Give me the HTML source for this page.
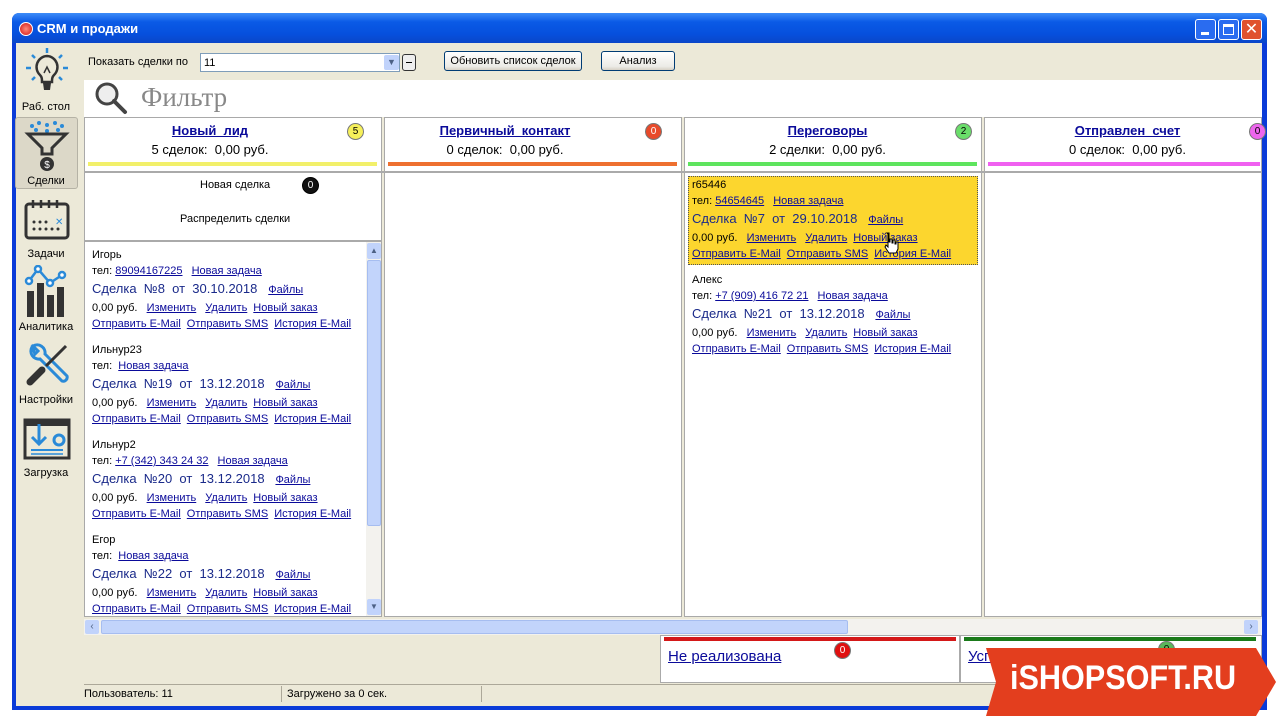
<!DOCTYPE html>
<html><head><meta charset="utf-8"><style>
*{margin:0;padding:0;box-sizing:border-box}
body{width:1280px;height:720px;background:#fff;position:relative;overflow:hidden;font-family:"Liberation Sans","DejaVu Sans",sans-serif;font-size:11px;color:#000}
.a{position:absolute}
a,.l{color:#0a0a9a;text-decoration:underline}
.win{left:12px;top:13px;width:1255px;height:697px;background:#0a3bd8;border-radius:7px 7px 0 0}
.tb{left:12px;top:13px;width:1255px;height:30px;border-radius:7px 7px 0 0;background:linear-gradient(#3d8cf8,#0a5ae6 30%,#0650dd 70%,#0a46c8)}
.cont{left:16px;top:43px;width:1246px;height:663px;background:#ece9d8}
.btn{background:linear-gradient(#fff,#ecebe6 80%,#d6d0c5);border:1px solid #003c74;border-radius:3px;text-align:center;line-height:18px}
.col{background:#fff;border:1px solid #a9a9a9}
.hd{text-align:center}
.hd .t{font-size:13px;font-weight:bold;color:#0a0a9a;text-decoration:underline;display:block;margin-top:5px}
.hd .s{font-size:13px;display:block;margin-top:4px}
.badge{width:17px;height:17px;border-radius:50%;font-size:10px;text-align:center;line-height:16px;border:1px solid #777}
.deal div{height:16px;line-height:16px;white-space:nowrap}
.deal .big{font-size:13px;height:21px;color:#1a2a8a;line-height:19px}
.deal a{margin-right:6px}
.side{text-align:center;width:64px;font-size:11px}
</style></head><body>
<div class="a win"></div>
<div class="a tb"></div>
<div class="a" style="left:19px;top:22px;width:14px;height:14px;border-radius:50%;background:radial-gradient(#ff8a7a,#d01010);border:1px solid #fff"></div>
<div class="a" style="left:37px;top:21px;color:#fff;font-weight:bold;font-size:13px">CRM и продажи</div>
<div class="a" style="left:1195px;top:19px;width:21px;height:21px;border:1px solid #fff;border-radius:3px;background:#2a6cf0"><div class="a" style="left:5px;top:12px;width:8px;height:3px;background:#fff"></div></div>
<div class="a" style="left:1218px;top:19px;width:21px;height:21px;border:1px solid #fff;border-radius:3px;background:#2a6cf0"><div class="a" style="left:4px;top:4px;width:11px;height:11px;border:1px solid #fff;border-top-width:3px"></div></div>
<div class="a" style="left:1241px;top:19px;width:21px;height:21px;border:1px solid #fff;border-radius:3px;background:#e0522e;color:#fff;font-size:16px;text-align:center;line-height:19px">✕</div>
<div class="a cont"></div>

<!-- sidebar -->
<div class="a" style="left:15px;top:117px;width:63px;height:72px;border:1px solid #b5b2a5;border-radius:3px;background:#dcd8c8"></div>
<svg class="a" style="left:24px;top:46px" width="46" height="54" viewBox="0 0 46 54"><g stroke="#2a8ad8" stroke-width="2.5"><line x1="23" y1="2" x2="23" y2="7"/><line x1="8" y1="9" x2="11" y2="12"/><line x1="38" y1="9" x2="35" y2="12"/><line x1="2" y1="22" x2="7" y2="22"/><line x1="39" y1="22" x2="44" y2="22"/><line x1="8" y1="34" x2="11" y2="31"/><line x1="38" y1="34" x2="35" y2="31"/></g><path d="M23 10a11 11 0 0 0-7 19c2 2 2 4 2 7h10c0-3 0-5 2-7a11 11 0 0 0-7-19z" fill="none" stroke="#333" stroke-width="2.5"/><path d="M19 37h8l-1 7h-6z" fill="#333"/><path d="M20 27l3-6 3 6" fill="none" stroke="#333" stroke-width="1.5"/></svg>
<div class="a side" style="left:14px;top:101px">Раб. стол</div>
<svg class="a" style="left:24px;top:120px" width="46" height="54" viewBox="0 0 46 54"><g fill="#2a8ad8"><circle cx="8" cy="6" r="2"/><circle cx="15" cy="3" r="2"/><circle cx="23" cy="5" r="2"/><circle cx="31" cy="3" r="2"/><circle cx="38" cy="6" r="2"/><circle cx="12" cy="10" r="2"/><circle cx="34" cy="10" r="2"/><circle cx="23" cy="11" r="2"/></g><path d="M4 14h38l-14 14v6h-10v-6z" fill="none" stroke="#333" stroke-width="3"/><circle cx="23" cy="44" r="7" fill="#333"/><text x="23" y="48" font-size="10" fill="#fff" text-anchor="middle" font-family="Liberation Sans">$</text></svg>
<div class="a side" style="left:14px;top:175px">Сделки</div>
<svg class="a" style="left:24px;top:198px" width="46" height="42" viewBox="0 0 46 42"><rect x="2" y="6" width="42" height="34" rx="3" fill="none" stroke="#333" stroke-width="3"/><g stroke="#333" stroke-width="2.5"><line x1="9" y1="2" x2="9" y2="10"/><line x1="17" y1="2" x2="17" y2="10"/><line x1="25" y1="2" x2="25" y2="10"/><line x1="33" y1="2" x2="33" y2="10"/></g><g fill="#333"><circle cx="10" cy="24" r="1.5"/><circle cx="16" cy="24" r="1.5"/><circle cx="22" cy="24" r="1.5"/><circle cx="10" cy="31" r="1.5"/><circle cx="16" cy="31" r="1.5"/><circle cx="22" cy="31" r="1.5"/><circle cx="28" cy="31" r="1.5"/><circle cx="34" cy="31" r="1.5"/></g><text x="31" y="27" font-size="10" fill="#2a8ad8" font-family="Liberation Sans">✕</text></svg>
<div class="a side" style="left:14px;top:248px">Задачи</div>
<svg class="a" style="left:24px;top:265px" width="46" height="54" viewBox="0 0 46 54"><g fill="#333"><rect x="3" y="26" width="7" height="26"/><rect x="13" y="18" width="7" height="34"/><rect x="23" y="30" width="7" height="22"/><rect x="33" y="22" width="7" height="30"/></g><polyline points="5,16 14,4 26,18 38,10" fill="none" stroke="#2a8ad8" stroke-width="2.5"/><g fill="#fff" stroke="#2a8ad8" stroke-width="2.5"><circle cx="5" cy="16" r="3"/><circle cx="14" cy="4" r="3"/><circle cx="26" cy="18" r="3"/><circle cx="38" cy="10" r="3"/></g></svg>
<div class="a side" style="left:14px;top:321px">Аналитика</div>
<svg class="a" style="left:24px;top:343px" width="46" height="46" viewBox="0 0 46 46"><path d="M8 4a8 8 0 0 0 8 12l22 22a4 4 0 0 0 5-5l-22-22a8 8 0 0 0-12-8l5 5-3 3z" fill="none" stroke="#2a8ad8" stroke-width="3"/><line x1="42" y1="3" x2="22" y2="23" stroke="#333" stroke-width="3"/><line x1="18" y1="27" x2="6" y2="39" stroke="#333" stroke-width="7" stroke-linecap="round"/></svg>
<div class="a side" style="left:14px;top:394px">Настройки</div>
<svg class="a" style="left:23px;top:416px" width="48" height="46" viewBox="0 0 48 46"><rect x="2" y="4" width="44" height="38" fill="none" stroke="#333" stroke-width="3"/><rect x="2" y="4" width="44" height="6" fill="#333"/><path d="M16 8v20m-7-7l7 7 7-7" fill="none" stroke="#2a8ad8" stroke-width="3"/><circle cx="36" cy="24" r="5" fill="none" stroke="#2a8ad8" stroke-width="3"/><line x1="8" y1="34" x2="40" y2="34" stroke="#2a8ad8" stroke-width="2"/><line x1="8" y1="38" x2="40" y2="38" stroke="#2a8ad8" stroke-width="1.5"/></svg>
<div class="a side" style="left:14px;top:467px">Загрузка</div>

<!-- toolbar -->
<div class="a" style="left:88px;top:56px">Показать сделки по</div>
<div class="a" style="left:200px;top:53px;width:200px;height:19px;border:1px solid #7f9db9;background:#fff;padding:3px 3px">11</div>
<div class="a" style="left:384px;top:55px;width:15px;height:15px;background:#c1d3fb;border-radius:2px;color:#4d6185;font-size:9px;text-align:center;line-height:15px">▼</div>
<div class="a" style="left:402px;top:54px;width:14px;height:17px;border:1px solid #333;border-radius:3px;background:#eee"><div class="a" style="left:3px;top:7px;width:6px;height:1px;background:#000"></div></div>
<div class="a btn" style="left:444px;top:51px;width:138px;height:20px">Обновить список сделок</div>
<div class="a btn" style="left:601px;top:51px;width:74px;height:20px">Анализ</div>

<!-- filter -->
<div class="a" style="left:84px;top:80px;width:1178px;height:37px;background:#fff"></div>
<svg class="a" style="left:94px;top:81px" width="34" height="34" viewBox="0 0 34 34"><circle cx="13" cy="13" r="10" fill="#eee" stroke="#444" stroke-width="3"/><line x1="20" y1="20" x2="31" y2="31" stroke="#444" stroke-width="4" stroke-linecap="round"/></svg>
<div class="a" style="left:141px;top:82px;font-family:'Liberation Serif',serif;font-size:27px;color:#888">Фильтр</div>

<!-- columns -->
<div class="a col" style="left:84px;top:117px;width:298px;height:500px"></div>
<div class="a col" style="left:384px;top:117px;width:298px;height:500px"></div>
<div class="a col" style="left:684px;top:117px;width:298px;height:500px"></div>
<div class="a col" style="left:984px;top:117px;width:278px;height:500px"></div>
<div class="a" style="left:85px;top:171px;width:1177px;height:2px;background:#aaa"></div>

<div class="a hd" style="left:85px;top:118px;width:250px"><span class="t">Новый&nbsp;&nbsp;лид</span><span class="s">5 сделок:&nbsp; 0,00 руб.</span></div>
<div class="a badge" style="left:347px;top:123px;background:#f6f05a">5</div>
<div class="a" style="left:88px;top:162px;width:289px;height:4px;background:#f2f06a"></div>

<div class="a hd" style="left:385px;top:118px;width:240px"><span class="t">Первичный&nbsp;&nbsp;контакт</span><span class="s">0 сделок:&nbsp; 0,00 руб.</span></div>
<div class="a badge" style="left:645px;top:123px;background:#e84a2a;color:#fff">0</div>
<div class="a" style="left:388px;top:162px;width:289px;height:4px;background:#ee7030"></div>

<div class="a hd" style="left:685px;top:118px;width:285px"><span class="t">Переговоры</span><span class="s">2 сделки:&nbsp; 0,00 руб.</span></div>
<div class="a badge" style="left:955px;top:123px;background:#6ade6a">2</div>
<div class="a" style="left:688px;top:162px;width:289px;height:4px;background:#5ee45e"></div>

<div class="a hd" style="left:985px;top:118px;width:285px"><span class="t">Отправлен&nbsp;&nbsp;счет</span><span class="s">0 сделок:&nbsp; 0,00 руб.</span></div>
<div class="a badge" style="left:1249px;top:123px;background:#ee66ee">0</div>
<div class="a" style="left:988px;top:162px;width:272px;height:4px;background:#f060f0"></div>

<div class="a" style="left:200px;top:179px;font-size:11px">Новая сделка</div>
<div class="a badge" style="left:302px;top:177px;background:#111;color:#fff;border-color:#000">0</div>
<div class="a" style="left:180px;top:213px">Распределить сделки</div>
<div class="a" style="left:85px;top:240px;width:296px;height:2px;background:#aaa"></div>

<!-- scrollbar col1 -->
<div class="a" style="left:366px;top:242px;width:15px;height:374px;background:#f3f2ee"></div>
<div class="a" style="left:367px;top:243px;width:14px;height:16px;background:#c1d3fb;border-radius:2px;font-size:8px;color:#4d6185;text-align:center;line-height:16px">▲</div>
<div class="a" style="left:367px;top:260px;width:14px;height:266px;background:#c2d4fb;border:1px solid #a6bdf0;border-radius:2px"></div>
<div class="a" style="left:367px;top:599px;width:14px;height:16px;background:#c1d3fb;border-radius:2px;font-size:8px;color:#4d6185;text-align:center;line-height:16px">▼</div>

<div class="a deal" style="left:92px;top:247px">
<div>Игорь</div><div>тел: <a>89094167225</a> <a>Новая задача</a></div><div class="big">Сделка&nbsp; №8&nbsp; от&nbsp; 30.10.2018 &nbsp;&nbsp;<a style="font-size:11px">Файлы</a></div><div>0,00 руб. &nbsp; <a>Изменить</a> <a>Удалить</a><a>Новый заказ</a></div><div><a>Отправить E-Mail</a><a>Отправить SMS</a><a>История E-Mail</a></div></div>
<div class="a deal" style="left:92px;top:342px">
<div>Ильнур23</div><div>тел: &nbsp;<a>Новая задача</a></div><div class="big">Сделка&nbsp; №19&nbsp; от&nbsp; 13.12.2018 &nbsp;&nbsp;<a style="font-size:11px">Файлы</a></div><div>0,00 руб. &nbsp; <a>Изменить</a> <a>Удалить</a><a>Новый заказ</a></div><div><a>Отправить E-Mail</a><a>Отправить SMS</a><a>История E-Mail</a></div></div>
<div class="a deal" style="left:92px;top:437px">
<div>Ильнур2</div><div>тел: <a>+7 (342) 343 24 32</a> <a>Новая задача</a></div><div class="big">Сделка&nbsp; №20&nbsp; от&nbsp; 13.12.2018 &nbsp;&nbsp;<a style="font-size:11px">Файлы</a></div><div>0,00 руб. &nbsp; <a>Изменить</a> <a>Удалить</a><a>Новый заказ</a></div><div><a>Отправить E-Mail</a><a>Отправить SMS</a><a>История E-Mail</a></div></div>
<div class="a deal" style="left:92px;top:532px">
<div>Егор</div><div>тел: &nbsp;<a>Новая задача</a></div><div class="big">Сделка&nbsp; №22&nbsp; от&nbsp; 13.12.2018 &nbsp;&nbsp;<a style="font-size:11px">Файлы</a></div><div>0,00 руб. &nbsp; <a>Изменить</a> <a>Удалить</a><a>Новый заказ</a></div><div><a>Отправить E-Mail</a><a>Отправить SMS</a><a>История E-Mail</a></div></div>

<div class="a" style="left:688px;top:176px;width:290px;height:89px;background:#fcd62e;border:1px dotted #555"></div>
<div class="a deal" style="left:692px;top:177px">
<div>r65446</div><div>тел: <a>54654645</a> <a>Новая задача</a></div><div class="big">Сделка&nbsp; №7&nbsp; от&nbsp; 29.10.2018 &nbsp;&nbsp;<a style="font-size:11px">Файлы</a></div><div>0,00 руб. &nbsp; <a>Изменить</a> <a>Удалить</a><a>Новый заказ</a></div><div><a>Отправить E-Mail</a><a>Отправить SMS</a><a>История E-Mail</a></div></div>
<div class="a deal" style="left:692px;top:272px">
<div>Алекс</div><div>тел: <a>+7 (909) 416 72 21</a> <a>Новая задача</a></div><div class="big">Сделка&nbsp; №21&nbsp; от&nbsp; 13.12.2018 &nbsp;&nbsp;<a style="font-size:11px">Файлы</a></div><div>0,00 руб. &nbsp; <a>Изменить</a> <a>Удалить</a><a>Новый заказ</a></div><div><a>Отправить E-Mail</a><a>Отправить SMS</a><a>История E-Mail</a></div></div>
<svg class="a" style="left:883px;top:232px" width="16" height="22" viewBox="0 0 16 22"><path d="M4 1h2v9h1V7h2v4h1V8h2v4h1V10h2v7l-2 4H6L2 15l1-2 2 2V2z" fill="#fff" stroke="#000" stroke-width="1"/></svg>

<!-- hscroll -->
<div class="a" style="left:84px;top:619px;width:1178px;height:16px;background:#f3f2ee"></div>
<div class="a" style="left:85px;top:620px;width:14px;height:14px;background:#c1d3fb;border-radius:2px;font-size:10px;color:#4d6185;text-align:center;line-height:14px">‹</div>
<div class="a" style="left:101px;top:620px;width:747px;height:14px;background:#c2d4fb;border:1px solid #a6bdf0;border-radius:2px"></div>
<div class="a" style="left:1244px;top:620px;width:14px;height:14px;background:#c1d3fb;border-radius:2px;font-size:10px;color:#4d6185;text-align:center;line-height:14px">›</div>

<!-- bottom cards -->
<div class="a" style="left:660px;top:635px;width:300px;height:48px;background:#fff;border:1px solid #aaa"></div>
<div class="a" style="left:960px;top:635px;width:302px;height:48px;background:#fff;border:1px solid #aaa"></div>
<div class="a" style="left:664px;top:637px;width:292px;height:4px;background:#d41818"></div>
<div class="a" style="left:964px;top:637px;width:292px;height:4px;background:#1a7a1a"></div>
<div class="a l" style="left:668px;top:648px;font-size:15px">Не реализована</div>
<div class="a badge" style="left:834px;top:642px;background:#e01010;color:#fff">0</div>
<div class="a l" style="left:968px;top:648px;font-size:15px">Усп</div>
<div class="a badge" style="left:1158px;top:641px;background:#5ab85a">0</div>

<!-- status -->
<div class="a" style="left:84px;top:684px;width:1178px;height:1px;background:#aca899"></div>
<div class="a" style="left:84px;top:688px">Пользователь: 11</div>
<div class="a" style="left:281px;top:686px;width:1px;height:16px;background:#aca899"></div>
<div class="a" style="left:287px;top:688px">Загружено за 0 сек.</div>
<div class="a" style="left:481px;top:686px;width:1px;height:16px;background:#aca899"></div>

<!-- banner -->
<svg class="a" style="left:984px;top:646px" width="296" height="74" viewBox="0 0 296 74"><polygon points="18,2 272,2 292,36 272,70 18,70 2,70 12,36 2,2" fill="#e33e1e"/></svg>
<div class="a" style="left:1010px;top:659px;font-size:34px;font-weight:bold;color:#fff;transform:scaleX(0.9);transform-origin:left">iSHOPSOFT.RU</div>
</body></html>
